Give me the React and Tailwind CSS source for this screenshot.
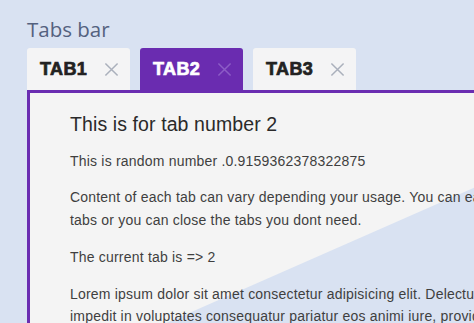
import React from 'react'

const tabs = [
  { id: 1, label: 'TAB1' },
  { id: 2, label: 'TAB2' },
  { id: 3, label: 'TAB3' },
]

const CloseIcon = ({ className }) => (
  <svg viewBox="0 0 16 16" className={className} fill="none" stroke="currentColor" strokeWidth="1.6">
    <path d="M1.5 1.5 L14.5 14.5 M14.5 1.5 L1.5 14.5" />
  </svg>
)

export default function App() {
  const active = 2

  return (
    <div className="h-screen w-full overflow-hidden bg-[#d9e2f2] pl-[27px] pt-[15px]">
      <h1 className="text-[20.5px] leading-[28px] text-[#54617f] font-['Open_Sans',sans-serif]">Tabs bar</h1>

      <div className="mt-[5px] flex gap-[10px]">
        {tabs.map((t) => (
          <div
            key={t.id}
            className={
              t.id === active
                ? 'flex h-[42px] w-[103px] items-center justify-between rounded-t-[3px] bg-[#6a2cb0] pl-[13px] pr-[11px]'
                : 'flex h-[42px] w-[103px] items-center justify-between rounded-t-[3px] bg-[#f4f4f5] pl-[13px] pr-[11px]'
            }
          >
            <span
              className={
                t.id === active
                  ? "text-[18px] font-bold tracking-[0.4px] text-white [-webkit-text-stroke:0.7px_white] font-['Liberation_Sans',Arial,sans-serif]"
                  : "text-[18px] font-bold tracking-[0.4px] text-[#222] [-webkit-text-stroke:0.7px_#222] font-['Liberation_Sans',Arial,sans-serif]"
              }
            >
              {t.label}
            </span>
            <CloseIcon className={t.id === active ? 'h-[15px] w-[15px] text-[#8c5cc6]' : 'h-[15px] w-[15px] text-[#aab0bc]'} />
          </div>
        ))}
      </div>

      <div className="relative w-[560px] border-[3px] border-[#6a2db1] bg-[#f4f4f4] pl-[40px] pt-[20px] pb-10 font-['Liberation_Sans',Arial,sans-serif]">
        <div className="absolute inset-0 bg-[#d9e2f2] [clip-path:polygon(-400px_466px,1000px_-150px,1000px_2000px,-400px_2000px)]" />
        <div className="relative text-[#3f3f3f]">
          <h2 className="text-[19.5px] leading-[23px] tracking-[0.1px] text-[#2a2a2a]">This is for tab number {active}</h2>
          <p className="mt-[14px] text-[14px] leading-[22.4px] tracking-[0.2px]">This is random number .0.9159362378322875</p>
          <p className="mt-[14px] text-[14px] leading-[22.4px] tracking-[0.2px] whitespace-nowrap">
            Content of each tab can vary depending your usage. You can easily add more
            <br />
            tabs or you can close the tabs you dont need.
          </p>
          <p className="mt-[14.5px] text-[14px] leading-[22.4px] tracking-[0.2px]">The current tab is =&gt; {active}</p>
          <p className="mt-[14.5px] text-[14px] leading-[22.4px] tracking-[0.2px] whitespace-nowrap">
            Lorem ipsum dolor sit amet consectetur adipisicing elit. Delectus, quibusdam
            <br />
            impedit in voluptates consequatur pariatur eos animi iure, provident
          </p>
        </div>
      </div>
    </div>
  )
}
